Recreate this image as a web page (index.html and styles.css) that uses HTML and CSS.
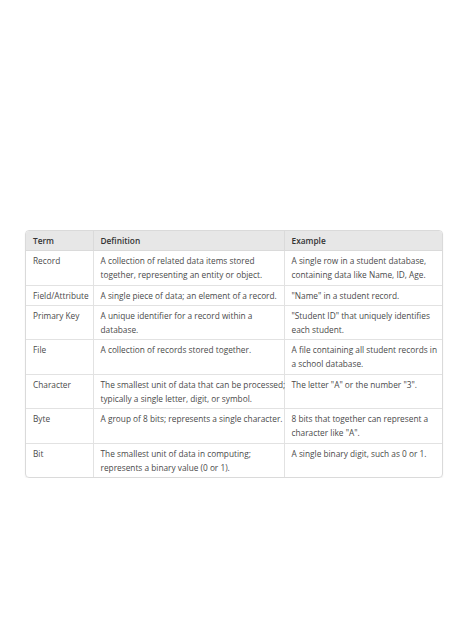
FILE: index.html
```html
<!DOCTYPE html>
<html>
<head>
<meta charset="utf-8">
<link rel="stylesheet" href="styles.css">
</head>
<body>
<div class="page">
  <div class="table-wrap">
    <table class="data-table">
      <colgroup>
        <col class="c1"><col class="c2"><col class="c3">
      </colgroup>
      <thead>
        <tr><th>Term</th><th>Definition</th><th>Example</th></tr>
      </thead>
      <tbody>
        <tr><td>Record</td><td>A collection of related data items stored<br>together, representing an entity or object.</td><td>A single row in a student database,<br>containing data like Name, ID, Age.</td></tr>
        <tr><td>Field/Attribute</td><td>A single piece of data; an element of a record.</td><td>"Name" in a student record.</td></tr>
        <tr><td>Primary Key</td><td>A unique identifier for a record within a<br>database.</td><td>"Student ID" that uniquely identifies<br>each student.</td></tr>
        <tr><td>File</td><td>A collection of records stored together.</td><td>A file containing all student records in<br>a school database.</td></tr>
        <tr><td>Character</td><td>The smallest unit of data that can be processed;<br>typically a single letter, digit, or symbol.</td><td>The letter "A" or the number "3".</td></tr>
        <tr><td>Byte</td><td>A group of 8 bits; represents a single character.</td><td>8 bits that together can represent a<br>character like "A".</td></tr>
        <tr><td>Bit</td><td>The smallest unit of data in computing;<br>represents a binary value (0 or 1).</td><td>A single binary digit, such as 0 or 1.</td></tr>
      </tbody>
    </table>
  </div>
</div>
</body>
</html>
```

FILE: styles.css
```css
html, body {
  margin: 0;
  padding: 0;
  background: #ffffff;
}
.page {
  padding: 230px 0 0 25px;
  font-family: "Open Sans", "Noto Sans", sans-serif;
}
.table-wrap {
  width: 416px;
  border: 1px solid #dadada;
  border-radius: 4px;
  overflow: hidden;
  box-shadow: 0 1px 2px rgba(0,0,0,0.06);
}
.data-table {
  width: 100%;
  border-collapse: collapse;
  table-layout: fixed;
  font-size: 8.3px;
  line-height: 14px;
  color: #4a4a4a;
}
.c1 { width: 67px; }
.c2 { width: 191px; }
.c3 { width: 158px; }
.data-table th {
  background: #e7e7e7;
  color: #333333;
  font-weight: 600;
  text-align: left;
  padding: 3px 2px 2px 7px;
  border-left: 1px solid #dadada;
  border-bottom: 1px solid #dadada;
}
.data-table td {
  vertical-align: top;
  text-align: left;
  white-space: nowrap;
  padding: 3px 2px 2px 7px;
  border-left: 1px solid #e2e2e2;
  border-top: 1px solid #e2e2e2;
}
.data-table th:first-child,
.data-table td:first-child {
  border-left: none;
}
.data-table tbody tr:nth-child(1) td,
.data-table tbody tr:nth-child(3) td,
.data-table tbody tr:nth-child(4) td,
.data-table tbody tr:nth-child(5) td,
.data-table tbody tr:nth-child(6) td,
.data-table tbody tr:nth-child(7) td {
  height: 28.5px;
}
```
